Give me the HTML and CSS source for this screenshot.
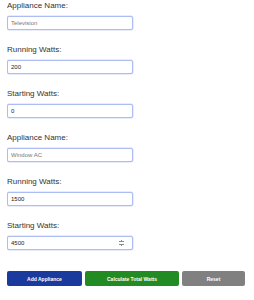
FILE: index.html
```html
<!DOCTYPE html>
<html lang="en">
<head>
    <meta charset="UTF-8">
    <title>Appliance Wattage Calculator</title>
    <link rel="stylesheet" href="styles.css">
</head>
<body>
    <div id="appliance-list">
        <div class="appliance">
            <div class="field">
                <label>Appliance Name:</label>
                <input type="text" placeholder="Television">
            </div>
            <div class="field">
                <label>Running Watts:</label>
                <input type="number" value="200">
            </div>
            <div class="field">
                <label>Starting Watts:</label>
                <input type="number" value="0">
            </div>
        </div>
        <div class="appliance">
            <div class="field">
                <label>Appliance Name:</label>
                <input type="text" placeholder="Window AC">
            </div>
            <div class="field">
                <label>Running Watts:</label>
                <input type="number" value="1500">
            </div>
            <div class="field">
                <label>Starting Watts:</label>
                <input type="number" value="4500" class="hovered">
            </div>
        </div>
    </div>

    <div class="button-panel">
        <button class="btn-add">Add Appliance</button>
        <button class="btn-calc">Calculate Total Watts</button>
        <button class="btn-reset">Reset</button>
    </div>
</body>
</html>
```

FILE: styles.css
```css
body {
    font-family: "Liberation Sans", Arial, sans-serif;
    margin: 0 7px;
    color: #333;
}

.field {
    height: 44px;
}

label {
    display: block;
    font-size: 8px;
    line-height: 10px;
    padding-top: 1px;
    margin-bottom: 5px;
}

input {
    display: block;
    box-sizing: border-box;
    width: 126px;
    height: 14px;
    margin: 0;
    padding: 0 3px;
    font-family: "Liberation Sans", Arial, sans-serif;
    font-size: 6px;
    color: #222;
    border: 1px solid #adbcf2;
    border-radius: 2px;
    box-shadow: 0 0 0 0.5px #d3dbf8;
    outline: none;
}

input::placeholder {
    color: #777;
}

input[type=number]::-webkit-inner-spin-button {
    opacity: 0;
}

input.hovered::-webkit-inner-spin-button {
    opacity: 1;
}

.button-panel {
    display: flex;
    gap: 3px;
    margin-top: 7px;
}

button {
    flex-shrink: 0;
    height: 15px;
    padding: 0;
    font-family: "Liberation Sans", Arial, sans-serif;
    font-size: 5px;
    font-weight: bold;
    white-space: nowrap;
    color: white;
    border: none;
    border-radius: 2px;
    cursor: pointer;
}

.btn-add {
    width: 75px;
    background-color: #1b3a9e;
}

.btn-calc {
    width: 94px;
    background-color: #238b23;
}

.btn-reset {
    width: 63px;
    background-color: #808080;
}
```
